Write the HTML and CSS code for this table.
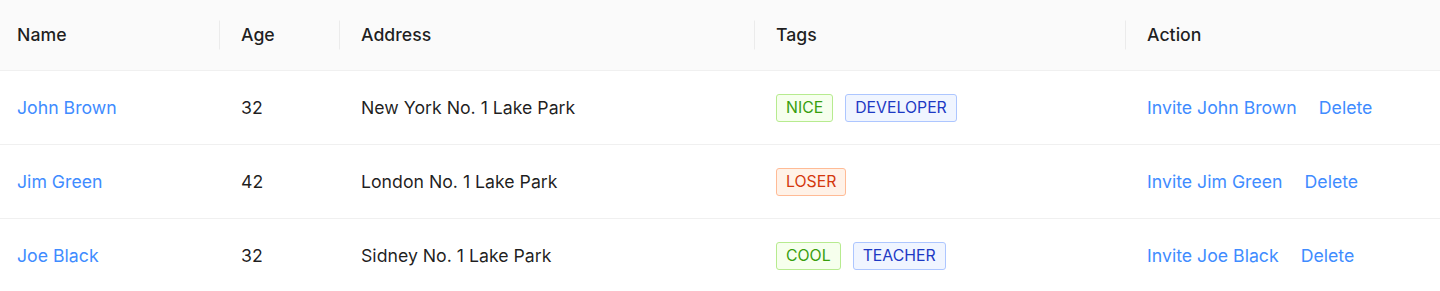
FILE: index.html
```html
<!DOCTYPE html>
<html lang="en">
<head>
<meta charset="utf-8">
<title>Table</title>
<link rel="stylesheet" href="styles.css">
</head>
<body>
<table class="table">
  <colgroup>
    <col class="c-name"><col class="c-age"><col class="c-addr"><col class="c-tags"><col class="c-action">
  </colgroup>
  <thead>
    <tr>
      <th class="first">Name</th>
      <th>Age</th>
      <th>Address</th>
      <th>Tags</th>
      <th class="last">Action</th>
    </tr>
  </thead>
  <tbody>
    <tr>
      <td class="first"><a class="link">John Brown</a></td>
      <td>32</td>
      <td>New York No. 1 Lake Park</td>
      <td><div class="tags"><span class="tag green">NICE</span><span class="tag geekblue">DEVELOPER</span></div></td>
      <td><div class="space"><a class="link">Invite John Brown</a><a class="link">Delete</a></div></td>
    </tr>
    <tr>
      <td class="first"><a class="link">Jim Green</a></td>
      <td>42</td>
      <td>London No. 1 Lake Park</td>
      <td><div class="tags"><span class="tag volcano">LOSER</span></div></td>
      <td><div class="space"><a class="link">Invite Jim Green</a><a class="link">Delete</a></div></td>
    </tr>
    <tr>
      <td class="first"><a class="link">Joe Black</a></td>
      <td>32</td>
      <td>Sidney No. 1 Lake Park</td>
      <td><div class="tags"><span class="tag green">COOL</span><span class="tag geekblue">TEACHER</span></div></td>
      <td><div class="space"><a class="link">Invite Joe Black</a><a class="link">Delete</a></div></td>
    </tr>
  </tbody>
</table>
</body>
</html>
```

FILE: styles.css
```css
html, body {
  margin: 0;
  padding: 0;
  background: #ffffff;
}
body {
  font-family: Inter, "Noto Sans", Roboto, sans-serif;
  font-size: 17.7px;
  color: rgba(0, 0, 0, 0.88);
}
.table {
  width: 1440px;
  border-collapse: separate;
  border-spacing: 0;
  table-layout: fixed;
}
.c-name { width: 220px; }
.c-age { width: 120px; }
.c-addr { width: 415px; }
.c-tags { width: 371px; }
.c-action { width: 314px; }

th {
  position: relative;
  background: #fafafa;
  font-weight: 500;
  text-align: left;
  padding: 21px 21px;
  line-height: 28px;
  border-bottom: 1px solid #f0f0f0;
}
th:not(.last)::before {
  content: "";
  position: absolute;
  right: 0;
  top: 50%;
  transform: translateY(-50%);
  width: 1px;
  height: 29px;
  background: #ebebeb;
}
td {
  padding: 22px 21px;
  line-height: 29px;
  height: 29px;
  border-bottom: 1px solid #f0f0f0;
  white-space: nowrap;
}
th.first, td.first { padding-left: 17px; }
tbody tr:last-child td { border-bottom: none; }

.link {
  color: #3f8cff;
  text-decoration: none;
  cursor: pointer;
}
.space {
  display: flex;
  align-items: center;
  gap: 22px;
  height: 29px;
}
.tags {
  display: flex;
  align-items: center;
  gap: 12px;
  height: 29px;
}
.tag {
  box-sizing: border-box;
  height: 28px;
  line-height: 26px;
  padding: 0 9px;
  font-size: 15.8px;
  border: 1px solid;
  border-radius: 3px;
}
.green { color: #389e0d; background: #f6ffed; border-color: #b7eb8f; }
.geekblue { color: #1d39c4; background: #f0f5ff; border-color: #adc6ff; }
.volcano { color: #d4380d; background: #fff2e8; border-color: #ffbb96; }
```
